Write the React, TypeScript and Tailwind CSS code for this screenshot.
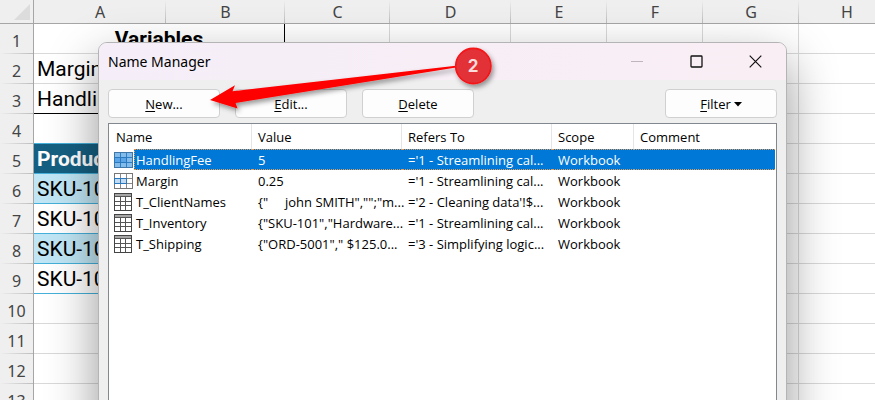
import { useState } from "react";
import clsx from "clsx";

const COLUMNS = ["A", "B", "C", "D", "E", "F", "G", "H"];

// Rows 5 to 9 hold the inventory table, the rest is plain grid
const ROWS = [
    { n: 1, text: "Variables", kind: "title" },
    { n: 2, text: "Margin", kind: "plain" },
    { n: 3, text: "Handling fee", kind: "last" },
    { n: 4, text: "", kind: "above" },
    { n: 5, text: "Product ID", kind: "head" },
    { n: 6, text: "SKU-101", kind: "band" },
    { n: 7, text: "SKU-102", kind: "white" },
    { n: 8, text: "SKU-103", kind: "band" },
    { n: 9, text: "SKU-104", kind: "white" },
    { n: 10, text: "", kind: "plain" },
    { n: 11, text: "", kind: "plain" },
    { n: 12, text: "", kind: "plain" },
    { n: 13, text: "", kind: "plain" },
];

const CELL_STYLES: Record<string, string> = {
    title: "border-[#d9d9d9] font-bold text-center border-r border-r-black",
    plain: "border-[#d9d9d9] pl-[3px]",
    last: "border-black pl-[3px]",
    above: "border-[#45b0d9] pl-[3px]",
    head: "border-[#45b0d9] bg-[#156082] pl-[3px] text-white font-bold",
    band: "border-[#45b0d9] bg-[#c0e6f5] pl-[3px]",
    white: "border-[#45b0d9] pl-[3px]",
};

const NAMES = [
    { name: "HandlingFee", value: "5", refers: "='1 - Streamlining cal...", icon: "range" },
    { name: "Margin", value: "0.25", refers: "='1 - Streamlining cal...", icon: "range" },
    { name: "T_ClientNames", value: "{\"     john SMITH\",\"\";\"m...", refers: "='2 - Cleaning data'!$...", icon: "table" },
    { name: "T_Inventory", value: "{\"SKU-101\",\"Hardware...", refers: "='1 - Streamlining cal...", icon: "table" },
    { name: "T_Shipping", value: "{\"ORD-5001\",\" $125.0...", refers: "='3 - Simplifying logic...", icon: "table" },
];

function RangeIcon({ selected }: { selected: boolean }) {
    const line = selected ? "#2f7fc4" : "#8a8a8a";
    return (
        <svg width="19" height="16" viewBox="0 0 19 16" shapeRendering="crispEdges" aria-hidden="true">
            <rect x="0.5" y="0.5" width="18" height="15" fill={selected ? "#83bbea" : "#fff"} stroke={selected ? "#3f77a8" : "#777"} />
            <path d="M6.5 1v14M12.5 1v14M1 5.5h17M1 10.5h17" stroke={line} fill="none" />
            <rect x="0.5" y="5.5" width="12" height="5" fill={selected ? "#5ba5e6" : "#c3dbf2"} stroke="#2b78bd" />
            <path d="M6.5 6v4" stroke="#2b78bd" />
        </svg>
    );
}

function TableIcon() {
    return (
        <svg width="18" height="18" viewBox="0 0 18 18" shapeRendering="crispEdges" aria-hidden="true">
            <rect x="0.5" y="0.5" width="17" height="17" fill="#fff" stroke="#444" />
            <rect x="1" y="1" width="16" height="2" fill="#a6a6a6" />
            <path d="M1 3.5h16M1 8.5h16M1 12.5h16M6.5 4v13M11.5 4v13" stroke="#555" fill="none" />
        </svg>
    );
}

function Sheet() {
    return (
        <table className="w-full table-fixed border-separate border-spacing-0 font-[Roboto,sans-serif] text-black">
            <colgroup>
                <col className="w-[34px]" />
                <col className="w-[132px]" />
                <col className="w-[119px]" />
                <col className="w-[105px]" />
                <col className="w-[121px]" />
                <col className="w-[96px]" />
                <col className="w-[96px]" />
                <col className="w-[96px]" />
                <col className="w-[96px]" />
            </colgroup>
            <thead>
                <tr className="h-6 bg-[#efefef] font-['Noto_Sans',sans-serif] text-base leading-5 text-[#444]">
                    <td className="h-6 border-r border-b border-[#a6a6a6] p-0 align-top">
                        <svg className="mt-1 ml-3.5" width="16" height="16" viewBox="0 0 16 16" aria-hidden="true">
                            <path d="M16 0v16H0z" fill="#dcdcdc" />
                        </svg>
                    </td>
                    {COLUMNS.map((c) => (
                        <th
                            key={c}
                            scope="col"
                            className="border-b border-[#a6a6a6] bg-linear-to-b from-[#efefef] to-[#bdbdbd] bg-size-[1px_100%] bg-right bg-no-repeat p-0 font-normal"
                        >
                            {c}
                        </th>
                    ))}
                </tr>
            </thead>
            <tbody>
                {ROWS.map((row) => (
                    <tr key={row.n} className="h-[30px]">
                        <th
                            scope="row"
                            className="h-[30px] border-r border-[#a6a6a6] bg-[#efefef] bg-linear-to-r from-[#efefef] to-[#bdbdbd] bg-size-[100%_1px] bg-bottom bg-no-repeat p-0 pt-1 text-center font-['Noto_Sans',sans-serif] text-base leading-5 font-normal text-[#444]"
                        >
                            {row.n}
                        </th>
                        <td
                            colSpan={row.kind === "title" ? 2 : 1}
                            className={clsx("border-b py-0 pt-px pr-0 text-[21px] leading-7 whitespace-nowrap", CELL_STYLES[row.kind])}
                        >
                            {row.text}
                        </td>
                        {COLUMNS.slice(row.kind === "title" ? 2 : 1).map((c) => (
                            <td key={c} className="border-r border-b border-[#d9d9d9] p-0" />
                        ))}
                    </tr>
                ))}
            </tbody>
        </table>
    );
}

function DialogButton({ label, rest }: { label: string; rest: string }) {
    return (
        <button type="button" className="h-[29px] w-28 rounded border border-[#d0d0d0] bg-[#fdfdfd] pt-px text-[13px] leading-5">
            <span className="underline underline-offset-2">{label}</span>
            {rest}
        </button>
    );
}

function NameList() {
    const [selected, setSelected] = useState("HandlingFee");

    return (
        <div className="flex-1 border border-[#828790] bg-white pr-px">
            <table className="w-full table-fixed border-separate border-spacing-0 text-left text-[13px] leading-5">
                <colgroup>
                    <col className="w-[25px]" />
                    <col className="w-[118px]" />
                    <col className="w-[150px]" />
                    <col className="w-[150px]" />
                    <col className="w-[82px]" />
                    <col />
                </colgroup>
                <thead>
                    <tr className="h-[25px]">
                        <th scope="col" colSpan={2} className="border-r border-[#e5e5e5] p-0 pl-[7px] font-normal">Name</th>
                        <th scope="col" className="border-r border-[#e5e5e5] p-0 pl-1.5 font-normal">Value</th>
                        <th scope="col" className="border-r border-[#e5e5e5] p-0 pl-1.5 font-normal">Refers To</th>
                        <th scope="col" className="border-r border-[#e5e5e5] p-0 pl-1.5 font-normal">Scope</th>
                        <th scope="col" className="p-0 pl-1.5 font-normal">Comment</th>
                    </tr>
                </thead>
                <tbody>
                    {NAMES.map((item) => {
                        const on = item.name === selected;
                        const cell = clsx(
                            "h-[21px] border-y border-dotted p-0 pt-px leading-[18px] whitespace-pre",
                            on ? "border-[#e39a54] bg-[#0078d7] text-white" : "border-transparent"
                        );
                        return (
                            <tr key={item.name} onClick={() => setSelected(item.name)}>
                                <td className="p-0 pl-[5px]">
                                    <div className="flex h-[21px] items-center">
                                        {item.icon === "range" ? <RangeIcon selected={on} /> : <TableIcon />}
                                    </div>
                                </td>
                                <td className={clsx(cell, "border-l pl-px")}>{item.name}</td>
                                <td className={clsx(cell, "pl-1.5")}>{item.value}</td>
                                <td className={clsx(cell, "pl-1.5")}>{item.refers}</td>
                                <td className={clsx(cell, "pl-1.5")}>Workbook</td>
                                <td className={cell} />
                            </tr>
                        );
                    })}
                </tbody>
            </table>
        </div>
    );
}

function NameManager() {
    return (
        <div
            role="dialog"
            aria-label="Name Manager"
            className="absolute top-[42px] right-[88px] -bottom-10 left-[98px] flex flex-col overflow-hidden rounded-t-[9px] border border-[#b4b4b4] bg-[#efefef] font-['Open_Sans',sans-serif] text-black shadow-[0_20px_50px_rgba(0,0,0,0.42)]"
        >
            <div className="flex h-[37px] shrink-0 items-center justify-between bg-linear-to-r from-[#f5eef8] to-[#f9eef4] pr-6 pl-[9px]">
                <h1 className="font-['Noto_Sans',sans-serif] text-sm">Name Manager</h1>
                <div className="flex items-center gap-[46px]">
                    <button type="button" aria-label="Minimize" disabled>
                        <svg width="13" height="13" viewBox="0 0 13 13"><path d="M0 6.5h12" stroke="#bdb6ba" /></svg>
                    </button>
                    <button type="button" aria-label="Maximize">
                        <svg width="13" height="13" viewBox="0 0 13 13"><rect x="1" y="1" width="11" height="11" rx="0.8" fill="none" stroke="#111" strokeWidth="1.3" /></svg>
                    </button>
                    <button type="button" aria-label="Close">
                        <svg width="13" height="13" viewBox="0 0 13 13"><path d="M0.7 0.7l11.6 11.6M12.3 0.7L0.7 12.3" stroke="#111" strokeWidth="1.2" /></svg>
                    </button>
                </div>
            </div>
            <div className="flex flex-1 flex-col px-[9px] pt-[9px]">
                <div className="mb-[5px] flex gap-[15px]">
                    <DialogButton label="N" rest="ew..." />
                    <DialogButton label="E" rest="dit..." />
                    <DialogButton label="D" rest="elete" />
                    <button type="button" className="ml-auto flex h-[29px] w-28 items-center justify-center gap-[3px] rounded border border-[#d0d0d0] bg-[#fdfdfd] pt-px text-[13px] leading-5">
                        <span><span className="underline underline-offset-2">F</span>ilter</span>
                        <svg width="8" height="5" viewBox="0 0 8 5" aria-hidden="true"><path d="M0 0h8L4 4.5z" fill="#000" /></svg>
                    </button>
                </div>
                <NameList />
            </div>
        </div>
    );
}

function StepArrow() {
    return (
        <svg className="pointer-events-none absolute top-10 left-[200px]" width="310" height="80" viewBox="200 40 310 80">
            <defs>
                <filter id="soft" x="-10%" y="-30%" width="120%" height="170%">
                    <feDropShadow dx="2" dy="3" stdDeviation="2.5" floodColor="#000" floodOpacity="0.4" />
                </filter>
            </defs>
            <g filter="url(#soft)">
                <path d="M210 100L235 85.3L232.5 91.3L456 65.8V67.5L235.5 103L237.6 108.5Z" fill="#fe0000" />
                <circle cx="473.3" cy="66" r="17.6" fill="#e23238" stroke="#f51216" strokeWidth="1.6" />
            </g>
            <text x="473" y="72" textAnchor="middle" fontFamily="Inter, sans-serif" fontWeight="700" fontSize="17" fill="#fbdcdd">2</text>
        </svg>
    );
}

export default function App() {
    return (
        <main className="relative h-screen overflow-hidden bg-white">
            <Sheet />
            <NameManager />
            <StepArrow />
        </main>
    );
}
